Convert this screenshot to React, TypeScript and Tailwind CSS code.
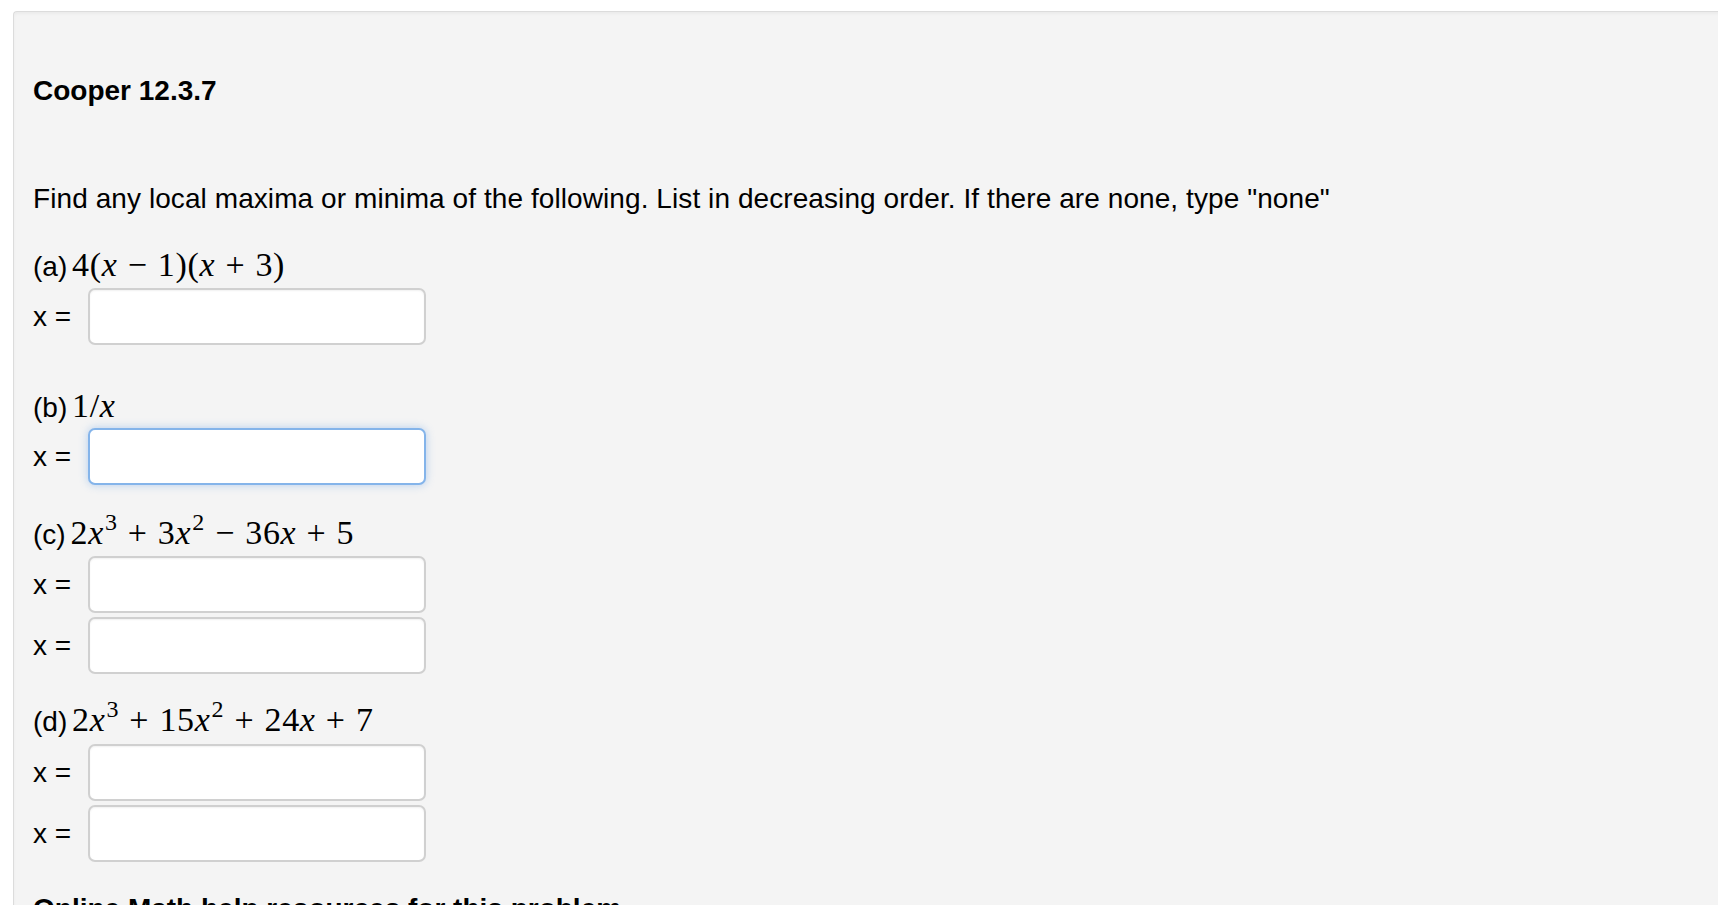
import React from "react"

const sans = { fontFamily: '"Liberation Sans", Arial, Helvetica, sans-serif' }

const M: React.FC<{ children: React.ReactNode }> = ({ children }) => (
  <span
    className="ml-[-3px] text-[34px] leading-[20px] tracking-[0.02em]"
    style={{ fontFamily: '"Liberation Serif", "Times New Roman", serif' }}
  >
    {children}
  </span>
)

const V: React.FC<{ children: React.ReactNode }> = ({ children }) => <i className="italic">{children}</i>

const Op: React.FC<{ children: React.ReactNode }> = ({ children }) => <span className="mx-[0.3em]">{children}</span>

const Sup: React.FC<{ children: React.ReactNode }> = ({ children }) => (
  <span className="relative -top-[0.6em] ml-[1px] text-[24px] leading-none">{children}</span>
)

const AnswerBox: React.FC<{ focused?: boolean; className?: string }> = ({ focused, className = "" }) => (
  <div className={`flex items-center ${className}`}>
    <span className="w-[55px] text-[28px] leading-[32px]">x =</span>
    <div
      className={`h-[57px] w-[338px] rounded-[7px] bg-white ${
        focused
          ? "border-2 border-[#84b4ea] shadow-[0_0_9px_rgba(102,160,230,0.45)]"
          : "border-2 border-[#d0d0d0] shadow-[inset_0_1px_2px_rgba(0,0,0,0.06)]"
      }`}
    />
  </div>
)

const PartLabel: React.FC<{ tag: string; children: React.ReactNode; className?: string }> = ({ tag, children, className = "" }) => (
  <div className={`h-[32px] text-[28px] leading-[32px] whitespace-nowrap ${className}`}>
    ({tag}) {children}
  </div>
)

export default function App() {
  return (
    <div className="h-[905px] overflow-hidden bg-white pl-[13px] pt-[11px] text-black" style={sans}>
      <div className="h-[1000px] w-[1760px] rounded-tl-[4px] border-t border-l border-[#dcdcdc] bg-[#f4f4f4] pl-[19px] shadow-[inset_0_2px_3px_rgba(0,0,0,0.04)]">
        <h1 className="mt-[63px] h-[32px] text-[28px] font-bold leading-[32px]">Cooper 12.3.7</h1>

        <p className="mt-[76px] h-[32px] text-[28px] leading-[32px] tracking-[0.08px] whitespace-nowrap">
          Find any local maxima or minima of the following. List in decreasing order. If there are none, type "none"
        </p>

        <PartLabel tag="a" className="mt-[36px]">
          <M>
            4(<V>x</V>
            <Op>−</Op>1)(<V>x</V>
            <Op>+</Op>3)
          </M>
        </PartLabel>
        <AnswerBox className="mt-[5px]" />

        <PartLabel tag="b" className="mt-[47px]">
          <M>
            1/<V>x</V>
          </M>
        </PartLabel>
        <AnswerBox focused className="mt-[4px]" />

        <PartLabel tag="c" className="mt-[34px]">
          <M>
            2<V>x</V>
            <Sup>3</Sup>
            <Op>+</Op>3<V>x</V>
            <Sup>2</Sup>
            <Op>−</Op>36<V>x</V>
            <Op>+</Op>5
          </M>
        </PartLabel>
        <AnswerBox className="mt-[5px]" />
        <AnswerBox className="mt-[4px]" />

        <PartLabel tag="d" className="mt-[32px]">
          <M>
            2<V>x</V>
            <Sup>3</Sup>
            <Op>+</Op>15<V>x</V>
            <Sup>2</Sup>
            <Op>+</Op>24<V>x</V>
            <Op>+</Op>7
          </M>
        </PartLabel>
        <AnswerBox className="mt-[6px]" />
        <AnswerBox className="mt-[4px]" />

        <h2 className="mt-[31px] text-[28px] font-bold leading-[32px]">Online Math help resources for this problem</h2>
      </div>
    </div>
  )
}
